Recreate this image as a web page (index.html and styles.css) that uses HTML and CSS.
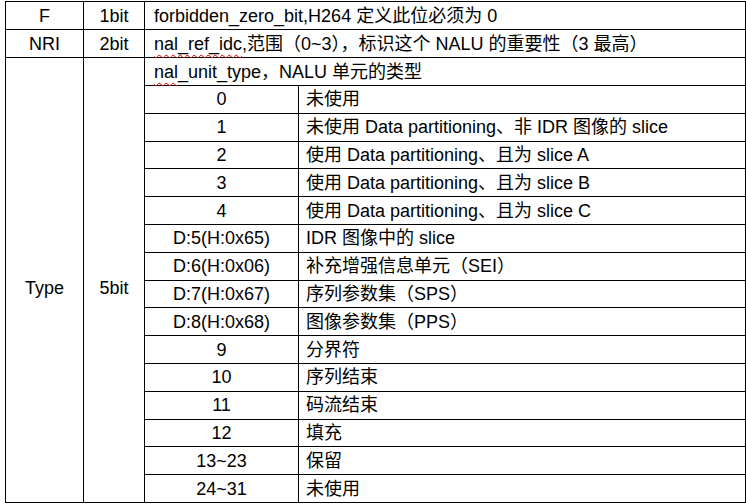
FILE: index.html
```html
<!DOCTYPE html>
<html lang="zh-CN">
<head>
<meta charset="utf-8">
<title>NALU header</title>
<link rel="stylesheet" href="styles.css">
</head>
<body>
<table class="nalu">
  <colgroup>
    <col class="c1"><col class="c2"><col class="c3"><col class="c4">
  </colgroup>
  <tbody>
    <tr class="top">
      <td class="ctr">F</td>
      <td class="ctr">1bit</td>
      <td class="txt" colspan="2">forbidden_zero_bit,H264 定义此位必须为 0</td>
    </tr>
    <tr class="top">
      <td class="ctr">NRI</td>
      <td class="ctr">2bit</td>
      <td class="txt" colspan="2"><span class="spell">nal_ref_idc</span>,范围（0~3），标识这个 NALU 的重要性（3 最高）</td>
    </tr>
    <tr class="top">
      <td class="ctr merged" rowspan="16">Type</td>
      <td class="ctr merged" rowspan="16">5bit</td>
      <td class="txt" colspan="2"><span class="spell">nal</span>_unit_type，NALU 单元的类型</td>
    </tr>
    <tr><td class="ctr">0</td><td class="txt2">未使用</td></tr>
    <tr><td class="ctr">1</td><td class="txt2">未使用 Data partitioning、非 IDR 图像的 slice</td></tr>
    <tr><td class="ctr">2</td><td class="txt2">使用 Data partitioning、且为 slice A</td></tr>
    <tr><td class="ctr">3</td><td class="txt2">使用 Data partitioning、且为 slice B</td></tr>
    <tr><td class="ctr">4</td><td class="txt2">使用 Data partitioning、且为 slice C</td></tr>
    <tr><td class="ctr">D:5(H:0x65)</td><td class="txt2">IDR 图像中的 slice</td></tr>
    <tr><td class="ctr">D:6(H:0x06)</td><td class="txt2">补充增强信息单元（SEI）</td></tr>
    <tr><td class="ctr">D:7(H:0x67)</td><td class="txt2">序列参数集（SPS）</td></tr>
    <tr><td class="ctr">D:8(H:0x68)</td><td class="txt2">图像参数集（PPS）</td></tr>
    <tr><td class="ctr">9</td><td class="txt2">分界符</td></tr>
    <tr><td class="ctr">10</td><td class="txt2">序列结束</td></tr>
    <tr><td class="ctr">11</td><td class="txt2">码流结束</td></tr>
    <tr><td class="ctr">12</td><td class="txt2">填充</td></tr>
    <tr><td class="ctr">13~23</td><td class="txt2">保留</td></tr>
    <tr><td class="ctr">24~31</td><td class="txt2">未使用</td></tr>
  </tbody>
</table>
</body>
</html>
```

FILE: styles.css
```css
html, body {
  margin: 0;
  padding: 0;
  background: #fff;
}

body {
  padding: 1px 0 0 5px;
  font-family: "Liberation Sans", Arial, "Noto Sans CJK SC", sans-serif;
  font-size: 18px;
  color: #000;
}

.nalu {
  border-collapse: collapse;
  table-layout: fixed;
  width: 740px;
}

.c1 { width: 78px; }
.c2 { width: 61px; }
.c3 { width: 154px; }
.c4 { width: 447px; }

.nalu td {
  border: 1px solid #000;
  padding: 0;
  height: 26.8px;
  line-height: 20px;
  white-space: nowrap;
  vertical-align: middle;
}

.nalu tr.top td {
  height: 27px;
}

.ctr {
  text-align: center;
}

.merged {
  padding-top: 16px !important;
}

.txt {
  padding-left: 9px !important;
}

.txt2 {
  padding-left: 7px !important;
}

.spell {
  text-decoration: underline wavy #e00000;
  text-decoration-thickness: 1px;
  text-underline-offset: 4px;
}
```
